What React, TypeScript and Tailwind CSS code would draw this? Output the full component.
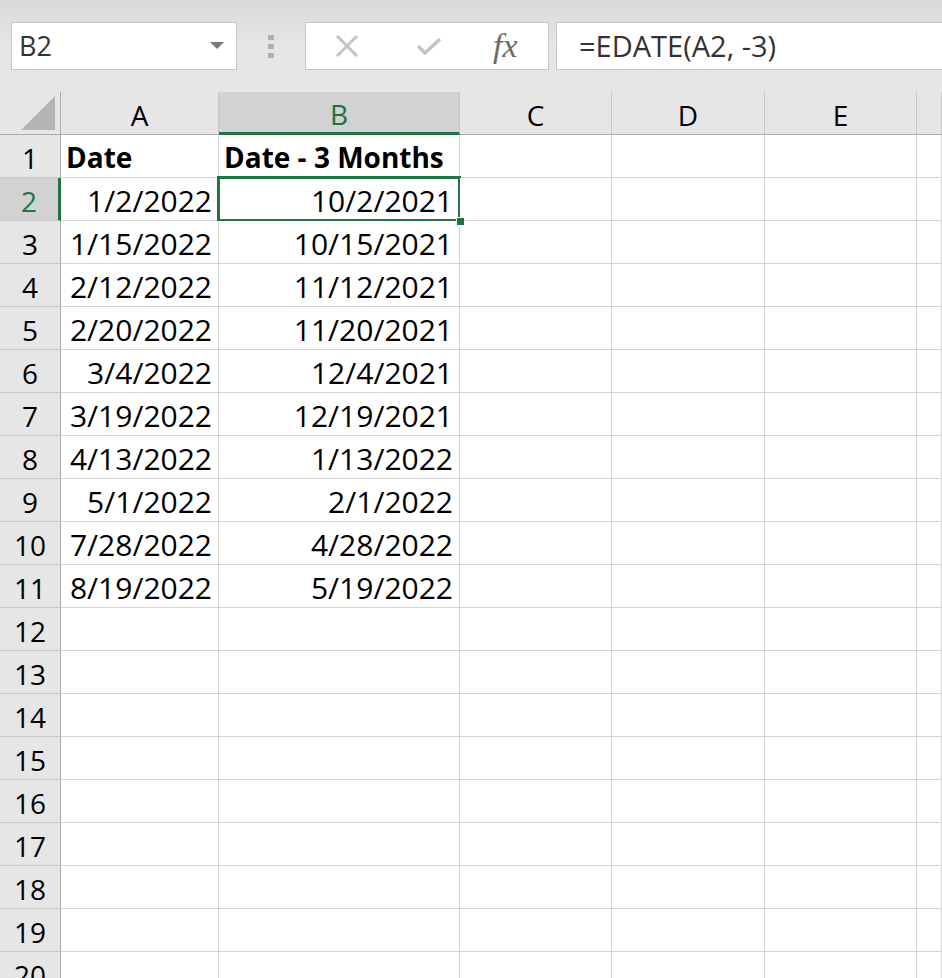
import React from 'react'

const cols = ['A', 'B', 'C', 'D', 'E', '']
const colW = ['w-[158px]', 'w-[241px]', 'w-[152px]', 'w-[153px]', 'w-[152px]', 'flex-1']

const data: [string, string][] = [
  ['1/2/2022', '10/2/2021'],
  ['1/15/2022', '10/15/2021'],
  ['2/12/2022', '11/12/2021'],
  ['2/20/2022', '11/20/2021'],
  ['3/4/2022', '12/4/2021'],
  ['3/19/2022', '12/19/2021'],
  ['4/13/2022', '1/13/2022'],
  ['5/1/2022', '2/1/2022'],
  ['7/28/2022', '4/28/2022'],
  ['8/19/2022', '5/19/2022'],
]

const ui = { fontFamily: '"Open Sans", "Noto Sans", sans-serif' }

function FormulaBar() {
  return (
    <div className="h-[92px] bg-gradient-to-b from-[#d9d9d9] via-[#e6e6e6] to-[#e6e6e6] flex items-start pt-[22px] pl-[11px]" style={ui}>
      <div className="w-[226px] h-[48px] bg-white border border-[#c6c6c6] flex items-center justify-between pl-[7px] pr-[12px]">
        <span className="text-[27px] text-[#333]">B2</span>
        <svg width="14" height="8" viewBox="0 0 14 8"><path d="M0 0h14L7 7z" fill="#7a7a7a" /></svg>
      </div>
      <div className="w-[68px] h-[48px] flex flex-col items-center justify-center gap-[4px]">
        <span className="w-[6px] h-[5px] bg-[#b0b0b0]" />
        <span className="w-[6px] h-[5px] bg-[#b0b0b0]" />
        <span className="w-[6px] h-[5px] bg-[#b0b0b0]" />
      </div>
      <div className="w-[244px] h-[48px] bg-white border border-[#c6c6c6] flex items-center">
        <svg className="ml-[29px]" width="24" height="22" viewBox="0 0 24 22">
          <path d="M2 1l20 20M22 1L2 21" stroke="#c4c4c4" strokeWidth="3" />
        </svg>
        <svg className="ml-[57px]" width="26" height="18" viewBox="0 0 26 18">
          <path d="M2 9l7 7L24 2" stroke="#c4c4c4" strokeWidth="3.5" fill="none" />
        </svg>
        <span className="ml-[51px] text-[34px] italic text-[#6b6b6b] leading-none" style={{ fontFamily: '"Liberation Serif", serif' }}>fx</span>
      </div>
      <div className="ml-[7px] flex-1 h-[48px] bg-white border border-[#c6c6c6] border-r-0 flex items-center pl-[22px]">
        <span className="text-[29px] text-[#333]">=EDATE(A2, -3)</span>
      </div>
    </div>
  )
}

function HeaderRow() {
  return (
    <div className="flex h-[43px] bg-[#e6e6e6] border-b border-[#ababab]" style={ui}>
      <div className="w-[61px] shrink-0 border-r border-[#ababab] flex items-end justify-end pr-[5px] pb-[4px]">
        <svg width="34" height="34" viewBox="0 0 34 34"><path d="M34 0V34H0z" fill="#b4b4b4" /></svg>
      </div>
      {cols.map((c, i) => (
        <div
          key={i}
          className={`${colW[i]} shrink-0 border-r border-[#c8c8c8] flex items-center justify-center pt-[3px] text-[28px] ${
            c === 'B' ? 'bg-[#d2d2d2] text-[#217346] border-b-[3px] border-b-[#217346] -mb-px' : 'text-black'
          }`}
        >
          {c}
        </div>
      ))}
    </div>
  )
}

function Row({ n, a, b, bold }: { n: number; a?: string; b?: string; bold?: boolean }) {
  const sel = n === 2
  return (
    <div className="flex h-[43px]">
      <div
        className={`w-[61px] shrink-0 border-b border-r flex items-center justify-center pt-[3px] text-[28px] ${
          sel ? 'bg-[#d2d2d2] text-[#217346] border-r-[3px] border-r-[#217346] border-b-[#c8c8c8]' : 'bg-[#e6e6e6] text-black border-[#c8c8c8] border-r-[#ababab]'
        }`}
        style={ui}
      >
        {n}
      </div>
      {cols.map((c, i) => {
        const txt = i === 0 ? a : i === 1 ? b : undefined
        return (
          <div
            key={i}
            className={`${colW[i]} shrink-0 border-b border-r border-[#d4d4d4] bg-white relative flex items-end whitespace-nowrap text-black ${
              bold ? 'justify-start pl-[5px] font-bold text-[28px] leading-[38px] pb-[1px]' : 'justify-end pr-[6px] text-[30px] leading-[38px]'
            }`}
            style={ui}
          >
            {txt}
            {sel && i === 1 && (
              <>
                <span className="absolute -left-[2px] -top-[2px] right-[-2px] bottom-[-2px] border-[3px] border-[#217346] pointer-events-none" />
                <span className="absolute right-[-6px] bottom-[-6px] w-[9px] h-[9px] bg-[#217346] border border-white z-10" />
              </>
            )}
          </div>
        )
      })}
    </div>
  )
}

export default function App() {
  return (
    <div className="w-[942px] h-[978px] overflow-hidden bg-white">
      <FormulaBar />
      <HeaderRow />
      <Row n={1} a="Date" b="Date - 3 Months" bold />
      {data.map(([a, b], i) => (
        <Row key={i} n={i + 2} a={a} b={b} />
      ))}
      {Array.from({ length: 9 }, (_, i) => (
        <Row key={'e' + i} n={i + 12} />
      ))}
    </div>
  )
}
